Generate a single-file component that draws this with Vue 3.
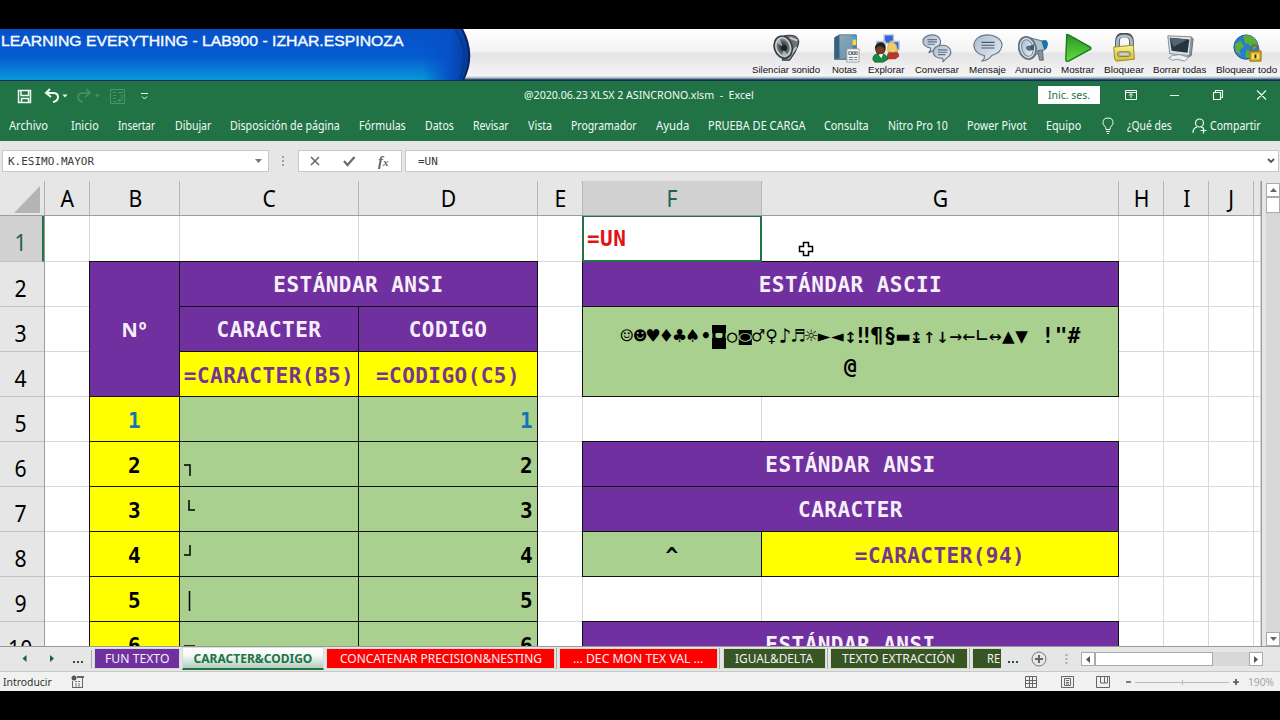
<script setup>
const vFit = {
  mounted(el, { value }) {
    const natural = el.offsetWidth
    if (!natural || !value) return
    el.style.transform = `scaleX(${value / natural})`
    el.style.marginRight = `${value - natural}px`
  },
}

const withGaps = (items) => items.map((item, i) => {
  const prev = items[i - 1]
  return { ...item, gap: prev ? item.x - prev.x - prev.w : item.x }
})

const menu = withGaps([
  ['Archivo', 9, 39], ['Inicio', 71, 28], ['Insertar', 118, 37], ['Dibujar', 175, 36],
  ['Disposición de página', 230, 110], ['Fórmulas', 359, 47], ['Datos', 425, 29],
  ['Revisar', 473, 36], ['Vista', 528, 24], ['Programador', 571, 66], ['Ayuda', 656, 33],
  ['PRUEBA DE CARGA', 708, 97], ['Consulta', 824, 45], ['Nitro Pro 10', 888, 60],
  ['Power Pivot', 967, 60], ['Equipo', 1046, 35],
].map(([label, x, w]) => ({ label, x, w })))

const tools = withGaps([
  ['Silenciar sonido', 'speaker', 752, 68], ['Notas', 'notes', 832, 25], ['Explorar', 'explore', 868, 36],
  ['Conversar', 'chat', 915, 44], ['Mensaje', 'message', 969, 37], ['Anuncio', 'horn', 1015, 36],
  ['Mostrar', 'play', 1061, 33], ['Bloquear', 'lock', 1104, 40], ['Borrar todas', 'monitor', 1153, 53],
  ['Bloquear todo', 'globe', 1216, 61],
].map(([label, icon, x, w]) => ({ label, icon, x, w })))

const columns = ['A', 'B', 'C', 'D', 'E', 'F', 'G', 'H', 'I', 'J', '']
const blanks = []
for (let r = 1; r <= 10; r++) for (let c = 1; c <= 11; c++) blanks.push({ r, c })

const symbols = '☺☻♥♦♣♠•◘○◙♂♀♪♬☼►◄↕‼¶§▬↨↑↓→←∟↔▲▼ !"#'.split('')
const symbolClass = (s) => ({
  inverse: s === '◘',
  squat: s === '◙',
  small: s === '○' || s === '•',
  thin: '↕↨↑↓→←∟↔☺'.includes(s),
})

const cells = [
  { r: 2, c: 2, rs: 3, cls: 'purple number', text: 'Nº' },
  { r: 2, c: 3, cs: 2, cls: 'purple', text: 'ESTÁNDAR ANSI' },
  { r: 3, c: 3, cls: 'purple', text: 'CARACTER' },
  { r: 3, c: 4, cls: 'purple', text: 'CODIGO' },
  { r: 4, c: 3, cls: 'formula', text: '=CARACTER(B5)' },
  { r: 4, c: 4, cls: 'formula', text: '=CODIGO(C5)' },
  { r: 2, c: 6, cs: 2, cls: 'purple', text: 'ESTÁNDAR ASCII' },
  { r: 6, c: 6, cs: 2, cls: 'purple', text: 'ESTÁNDAR ANSI' },
  { r: 7, c: 6, cs: 2, cls: 'purple', text: 'CARACTER' },
  { r: 8, c: 6, cls: 'green', text: '^' },
  { r: 8, c: 7, cls: 'formula', text: '=CARACTER(94)' },
  { r: 10, c: 6, cs: 2, cls: 'purple', text: 'ESTÁNDAR ANSI' },
]
for (let n = 1; n <= 6; n++) {
  const first = n === 1 ? ' blue' : ''
  cells.push({ r: n + 4, c: 2, cls: 'yellow' + first, text: n })
  cells.push({ r: n + 4, c: 4, cls: 'green right' + first, text: n })
}
const boxGlyphs = ['', 'M4 23h6v11', 'M9 13v10h6', 'M4 23h6v-10', 'M9.5 14v20', 'M4 24h11']

const place = (o) => ({
  gridRow: `${o.r} / span ${o.rs || 1}`,
  gridColumn: `${o.c} / span ${o.cs || 1}`,
})

const tabs = withGaps([
  ['FUN TEXTO', 'violet', 94, 86, 64], ['CARACTER&CODIGO', 'active', 182, 142, 119],
  ['CONCATENAR PRECISION&NESTING', 'red', 326, 229, 202], ['... DEC MON TEX VAL ...', 'red', 559, 159, 130],
  ['IGUAL&DELTA', 'olive', 723, 103, 78], ['TEXTO EXTRACCIÓN', 'olive', 830, 138, 113], ['RE', 'olive cut', 972, 29, 13],
].map(([label, cls, x, w, textW]) => ({ label, cls, x, w, textW })))
tabs[0].gap = 1
</script>

<template>
  <div class="screen">
    <header class="lab">
      <svg class="swoosh" width="472" height="51" viewBox="0 0 472 51">
        <defs>
          <linearGradient id="sky" x1="0" y1="0" x2="0" y2="1">
            <stop offset="0" stop-color="#0650c8" /><stop offset=".55" stop-color="#065bd0" />
            <stop offset="1" stop-color="#0798d8" />
          </linearGradient>
          <linearGradient id="edge" x1="0" y1="0" x2="1" y2="0">
            <stop offset="0" stop-color="#0650c8" stop-opacity="0" /><stop offset=".6" stop-color="#0650c4" />
            <stop offset="1" stop-color="#053a98" />
          </linearGradient>
        </defs>
        <path d="M0 0H462Q476 26 463 51H0Z" fill="url(#sky)" />
        <path d="M422 51L422 0H462Q476 26 463 51Z" fill="url(#edge)" />
        <path d="M455 0Q472 26 459 51" fill="none" stroke="#063288" stroke-width="2" opacity=".6" />
        <path d="M462 0Q476 26 463 51" fill="none" stroke="#06245e" stroke-width="2" />
      </svg>
      <div class="lab-title"><span v-fit="402" class="fit">LEARNING EVERYTHING - LAB900 - IZHAR.ESPINOZA</span></div>
      <div class="tools">
        <div v-for="t in tools" :key="t.label" class="tool" :style="{ width: t.w + 'px', marginLeft: t.gap + 'px' }">
          <svg width="30" height="30" viewBox="0 0 32 32">
            <defs>
              <radialGradient id="steel"><stop offset="0" stop-color="#191d20" /><stop offset=".45" stop-color="#4f565b" /><stop offset="1" stop-color="#b9c1c6" /></radialGradient>
              <linearGradient id="bubble" x1="0" y1="0" x2="1" y2="1"><stop offset="0" stop-color="#a9b9cb" /><stop offset="1" stop-color="#edf2f7" /></linearGradient>
              <linearGradient id="book" x1="0" y1="0" x2="1" y2="1"><stop offset="0" stop-color="#9ab4c6" /><stop offset="1" stop-color="#416b87" /></linearGradient>
              <linearGradient id="go" x1="0" y1="0" x2="0" y2="1"><stop offset="0" stop-color="#25962a" /><stop offset="1" stop-color="#65dc39" /></linearGradient>
              <linearGradient id="gold" x1="0" y1="0" x2="0" y2="1"><stop offset="0" stop-color="#faf391" /><stop offset="1" stop-color="#d4bc2a" /></linearGradient>
            </defs>
            <g v-if="t.icon === 'speaker'">
              <path d="M14 3Q24 1 28 5Q31 9 29 13Q27 20 20 29L12 29Z" fill="#6b7276" stroke="#272b2e" />
              <path d="M18 27l9-12M20 5l8 3" stroke="#c6ccd0" stroke-width="2" />
              <ellipse cx="13" cy="15" rx="9.500" ry="12" transform="rotate(-18 13 15)" fill="url(#steel)" stroke="#30363a" stroke-width="1.600" />
              <ellipse cx="13" cy="15" rx="7.500" ry="10" transform="rotate(-18 13 15)" fill="none" stroke="#dce0e2" />
              <path d="M13 15L6 10l3-4zM13 17l5 7-6 1z" fill="#bcc4c8" opacity=".75" />
              <circle cx="14" cy="16" r="3" fill="#1c2023" />
            </g>
            <g v-else-if="t.icon === 'notes'">
              <path d="M5 5L10 2H28V24L24 28H5Z" fill="url(#book)" stroke="#455e6e" />
              <path d="M5 5L10 2V26L5 28Z" fill="#37617d" />
              <path d="M11 2H24V26L11 28Z" fill="#83a6bc" opacity=".6" />
              <path d="M24 3h4v4h-4z" fill="#36a8df" /><path d="M24 7h4v6h-4z" fill="#edda48" />
              <path d="M18 17H31V31H18Z" fill="#fcfcfc" stroke="#969da2" />
              <path d="M20 20h3v3h-3zM24 20h2v3h-2zM27 20h2v3h-2zM20 26h5M26 26h3M20 28.500h5M26 28.500h3" fill="none" stroke="#57666f" />
            </g>
            <g v-else-if="t.icon === 'explore'">
              <path d="M14 2h10v9H14zM6 9h9v9H6zM21 9h9v9H21z" fill="#3266df" stroke="#bcc6d5" stroke-width="1.500" />
              <path d="M17 25Q17 19 24 19Q30 19 30 25L26 28H18Z" fill="#b33a2a" />
              <path d="M18 20Q17 9 22 10Q28 10 28 20Z" fill="#efd45b" stroke="#ceb134" />
              <ellipse cx="23" cy="16" rx="3" ry="4.500" fill="#f3c67b" />
              <path d="M2 28Q2 22 9 22Q17 22 18 28L13 31H4Z" fill="#198b43" stroke="#11602f" />
              <ellipse cx="10" cy="17" rx="5" ry="6" fill="#7c3b22" stroke="#33251d" />
              <path d="M4 17Q4 10 11 10Q17 11 15 18Q14 14 8 14Z" fill="#1e211e" /><path d="M8 23l3 4 2-5z" fill="#fff" />
            </g>
            <g v-else-if="t.icon === 'chat'" fill="url(#bubble)" stroke="#66758a" stroke-width="1.200">
              <path d="M11 2C5 2 1 5 1 9C1 13 5 15 9 16Q10 19 7 21Q14 19 16 15C24 10 18 2 11 2Z" />
              <path d="M22 13C16 13 12 16 12 20C12 25 17 27 22 27Q23 29 22 31L27 26C34 22 30 13 22 13Z" />
              <path d="M6 7h10M6 9.500h10M6 12h8M17 18h10M17 20.500h10M17 23h8" fill="none" />
            </g>
            <g v-else-if="t.icon === 'message'" fill="url(#bubble)" stroke="#66758a" stroke-width="1.200">
              <path d="M16 2C7 2 1 7 1 13C1 19 6 23 12 24Q13 28 9 30Q17 29 20 24C27 22 31 18 31 12C30 6 23 2 16 2Z" />
              <path d="M9 10h14M9 13h14M9 16h14" fill="none" stroke="#465a6c" />
            </g>
            <g v-else-if="t.icon === 'horn'">
              <path d="M12 5L28 9Q32 13 28 18L14 26Z" fill="#b3c1cb" stroke="#586c7a" />
              <path d="M25 9Q31 5 32 12Q31 18 28 18Z" fill="#1775ae" /><path d="M21 19l2 10h4l-1-11z" fill="#87949d" stroke="#58656d" />
              <ellipse cx="10" cy="16" rx="9" ry="12" transform="rotate(-15 10 16)" fill="#d9e0e6" stroke="#5d7488" stroke-width="2" />
              <ellipse cx="10" cy="16" rx="6" ry="9" transform="rotate(-15 10 16)" fill="url(#bubble)" stroke="#6c8292" />
              <path d="M11 14l6-2v6l-6 1z" fill="#3c5c73" /><circle cx="11" cy="16" r="2.500" fill="#566f81" />
            </g>
            <path v-else-if="t.icon === 'play'" d="M4 2Q3 1 6 2L29 15Q31 17 28 18L6 30Q3 31 3 28Z" fill="url(#go)" stroke="#17791f" stroke-width="1.500" />
            <g v-else-if="t.icon === 'lock'">
              <path d="M9 17V9Q9 2 16 2Q24 2 24 9V15" fill="none" stroke="#46515a" stroke-width="5" />
              <path d="M9 17V9Q9 3 16 3Q24 3 24 9V15" fill="none" stroke="#afbcc5" stroke-width="3" />
              <path d="M5 15L26 13L27 28L8 30Q6 29 6 27Z" fill="url(#gold)" stroke="#92832a" />
              <rect x="9" y="20" width="14" height="5" rx="2.500" fill="#b5b9a2" stroke="#837e43" /><path d="M12 22.500h8" stroke="#eee" />
            </g>
            <g v-else-if="t.icon === 'monitor'">
              <path d="M27 4L30 6L28 24L24 26" fill="#8c969c" stroke="#646e73" />
              <path d="M3 3L28 4L26 24L5 22Z" fill="#dce2e4" stroke="#7e898f" />
              <path d="M5 5L26 7L24 21L7 19Z" fill="#25343f" /><path d="M5 5L24 7L9 15Z" fill="#52646f" />
              <path d="M8 24l8-1 9 3-4 4-8-2-5 1-4-2z" fill="#eef1f1" stroke="#899296" />
            </g>
            <g v-else>
              <circle cx="15" cy="15" r="13" fill="#287bd2" stroke="#225792" />
              <path d="M12 3Q24 0 28 13L23 18L17 11L15 12L13 8zM3 12L9 8L13 14L8 18L10 24L4 20zM15 18L22 20L20 27L14 26z" fill="#58af39" />
              <path d="M21 21V17Q21 13 24 13Q28 13 28 17V20" fill="none" stroke="#65706e" stroke-width="2.500" />
              <path d="M19 20L31 19V30H19Z" fill="#d8a71b" stroke="#927411" /><path d="M21 22h8v6h-8z" fill="#f5de62" /><path d="M25 23v4" stroke="#37290a" stroke-width="2" />
            </g>
          </svg>
          <div class="tool-label"><span v-fit="t.w" class="fit">{{ t.label }}</span></div>
        </div>
      </div>
    </header>

    <div class="titlebar">
      <svg class="quick" width="160" height="24" viewBox="0 0 160 24" fill="none" stroke="#eff8f1">
        <path d="M18.500 6.500h12v12h-12zM21 6.500v5h7.500v-5M21.500 18.500v-4h7v4" stroke-width="1.500" />
        <path d="M50 5l-4 4 5 4M47 9h6q5 0 5 4t-5 5" stroke-width="2" />
        <path d="M62.500 10.500h5l-2.500 3z" fill="#eff8f1" stroke="none" />
        <g stroke="#4d9368"><path d="M86 5l4 4-5 4M89 9h-6q-5 0-5 4t5 5" stroke-width="1.500" />
          <path d="M110.500 5.500h14v14h-14zM113 8.500h3M118 8.500h5M113 11.500h3M113 14.500h3M113 17.500h3M118 16.500h4v-4M120 10.500l2 2 2-2M120 14.500l-2 2 2 2" />
          <path d="M95 10.500h5l-2.500 3z" fill="#4d9368" stroke="none" /></g>
        <path d="M141 9.500h7M142 12.500l2.500 2.500 2.500-2.500" />
      </svg>
      <div class="doc-name"><span v-fit="230" class="fit">@2020.06.23 XLSX 2 ASINCRONO.xlsm&nbsp; -&nbsp; Excel</span></div>
      <div class="sign-in"><span v-fit="42" class="fit">Inic. ses.</span></div>
      <svg class="window-buttons" width="160" height="24" viewBox="0 0 160 24" fill="none" stroke="#f2faf5">
        <path d="M5.500 7.500h11v9h-11zM5.500 9.500h11M11 15v-4M9 12.500l2-2 2 2" />
        <path d="M50 12.500h9M93.500 9.500h7v7h-7zM95.500 9.500v-2h7v7h-2M137 7.500l9 9M146 7.500l-9 9" stroke-width="1.100" />
      </svg>
    </div>

    <nav class="menu">
      <div v-for="m in menu" :key="m.label" :style="{ width: m.w + 'px', marginLeft: m.gap + 'px' }"><span v-fit="m.w" class="fit">{{ m.label }}</span></div>
      <svg class="bulb" width="12" height="18" viewBox="0 0 12 18" fill="none" stroke="#f2faf5"><path d="M4 12.500Q4 10 2.500 9Q1 7.500 1 5.500Q1 1 6 1T11 5.500Q11 7.500 9.500 9Q8 10 8 12.500ZM4 14.500h4M5 16.500h2" /></svg>
      <div class="ask"><span v-fit="45" class="fit">¿Qué des</span></div>
      <svg class="person" width="16" height="16" viewBox="0 0 16 16" fill="none" stroke="#f2faf5" stroke-width="1.200"><circle cx="7.500" cy="5" r="4" /><path d="M1 15Q1 10 5 9M9 9l2 1M11.500 9.500v6M8.500 12.500h6" /></svg>
      <div class="share"><span v-fit="51" class="fit">Compartir</span></div>
    </nav>

    <div class="formula-bar">
      <div class="name-box"><span v-fit="86" class="fit">K.ESIMO.MAYOR</span>
        <svg width="7" height="4" viewBox="0 0 7 4"><path d="M0 0h7L3.500 4z" fill="#777" /></svg>
      </div>
      <svg class="dots" width="3" height="12" viewBox="0 0 3 12"><path d="M0 1h2v2h-2zM0 5h2v2h-2zM0 9h2v2h-2z" fill="#a2a2a2" /></svg>
      <div class="fx">
        <svg width="54" height="16" viewBox="0 0 54 16" fill="none" stroke="#6c6c6c"><path d="M3 4l8 8M11 4L3 12" stroke-width="1.700" /><path d="M36 8l3.500 4 7-8" stroke-width="2.300" /></svg>
        <i>f<small>x</small></i>
      </div>
      <div class="formula-input"><span v-fit="20" class="fit">=UN</span>
        <svg width="8" height="6" viewBox="0 0 8 6"><path d="M1 1l3 3 3-3" fill="none" stroke="#555" stroke-width="1.800" /></svg>
      </div>
    </div>

    <main class="sheet">
      <div class="sheet-main">
        <div class="col-heads">
          <div class="corner"><svg width="27" height="27" viewBox="0 0 27 27"><path d="M26 0V27H0Z" fill="#b4b4b4" /></svg></div>
          <div v-for="c in columns" :key="c" class="col-head" :class="{ selected: c === 'F' }"><span>{{ c }}</span></div>
        </div>
        <div class="body">
          <div class="row-heads">
            <div v-for="n in 10" :key="n" :class="{ selected: n === 1 }"><span>{{ n }}</span></div>
          </div>
          <div class="cells">
            <div v-for="b in blanks" :key="b.r + '-' + b.c" class="blank" :style="place(b)"></div>
            <div v-for="(c, i) in cells" :key="'c' + i" class="cell" :class="c.cls" :style="place(c)"><span>{{ c.text }}</span></div>
            <div v-for="(g, i) in boxGlyphs" :key="'g' + i" class="cell green glyph" :style="place({ r: i + 5, c: 3 })">
              <svg width="24" height="44" viewBox="0 0 24 44" fill="none" stroke="#000" stroke-width="1.500"><path :d="g" /></svg>
            </div>
            <div class="cell green ascii" :style="place({ r: 3, c: 6, rs: 2, cs: 2 })">
              <div class="symbols"><b v-for="(s, i) in symbols" :key="i" :class="symbolClass(s)">{{ s }}</b></div>
              <div>@</div>
            </div>
            <div class="cell entry" :style="place({ r: 1, c: 6 })"><span>=UN</span></div>
            <div class="cursor-cell" :style="place({ r: 1, c: 7 })">
              <svg width="16" height="16" viewBox="0 0 16 16"><path d="M5.500 1.500h5v4h4v5h-4v4h-5v-4h-4v-5h4z" fill="#fff" stroke="#000" stroke-width="1.500" /></svg>
            </div>
          </div>
        </div>
      </div>
      <div class="v-scroll">
        <div class="box"><svg width="7" height="4" viewBox="0 0 7 4"><path d="M0 4h7L3.500 0z" fill="#666" /></svg></div>
        <div class="v-thumb"></div>
        <div class="v-track"></div>
        <div class="box"><svg width="7" height="4" viewBox="0 0 7 4"><path d="M0 0h7L3.500 4z" fill="#666" /></svg></div>
      </div>
    </main>

    <div class="tab-strip">
      <svg width="93" height="22" viewBox="0 0 93 22"><path d="M26.500 8v7l-4-3.500zM50 8v7l4-3.500z" fill="#0f6342" /><path d="M73 14h2v2h-2zM77 14h2v2h-2zM81 14h2v2h-2z" fill="#21583f" /><path d="M91.500 3v18" stroke="#a9a9a9" /></svg>
      <div v-for="t in tabs" :key="t.label" class="tab" :class="t.cls" :style="{ width: t.w + 'px', marginLeft: t.gap + 'px' }"><span v-fit="t.textW" class="fit">{{ t.label }}</span></div>
      <svg class="strip-end" width="76" height="24" viewBox="0 0 76 24" fill="none"><path d="M7 14h2v2h-2zM11 14h2v2h-2zM15 14h2v2h-2z" fill="#21583f" /><circle cx="38" cy="12" r="7" stroke="#777" /><path d="M34 12h8M38 8v8" stroke="#666" stroke-width="2" /><path d="M64.500 7h2v2h-2zM64.500 11h2v2h-2zM64.500 15h2v2h-2z" fill="#aaa" /></svg>
      <div class="h-scroll">
        <div class="box"><svg width="4" height="7" viewBox="0 0 4 7"><path d="M4 0v7L0 3.500z" fill="#555" /></svg></div>
        <div class="h-thumb"></div><div class="h-track"></div>
        <div class="box"><svg width="4" height="7" viewBox="0 0 4 7"><path d="M0 0v7L4 3.500z" fill="#555" /></svg></div>
      </div>
    </div>

    <footer class="status">
      <div class="mode"><span v-fit="49" class="fit">Introducir</span></div>
      <svg class="macro" width="14" height="14" viewBox="0 0 14 14"><circle cx="3" cy="3" r="2.500" fill="#555" /><path d="M6 1h7v2h-7zM1 6h1v6h9v-9h1v10h-11z" fill="#666" /><path d="M4 6.500h2M7 6.500h2M4 9h2M7 9h2M4 11h2M7 11h2" stroke="#777" /></svg>
      <svg class="views" width="220" height="16" viewBox="0 0 220 16" fill="none" stroke="#666">
        <path d="M5.500 2.500h11v11h-11zM5.500 6.500h11M5.500 9.500h11M9.500 2.500v11M12.500 2.500v11" />
        <path d="M41.500 2.500h12v11h-12zM44.500 4.500h6v7h-6zM46 6.500h3M46 8.500h3M46 10h3" />
        <path d="M76.500 2.500h13v11h-13zM80.500 2.500v6.500h4v-6.500M84.500 9h3v-6" />
        <path d="M106 8h5M213 8h6M216 5v6" stroke="#555" stroke-width="1.700" />
        <path d="M115 8.500h94M162.500 6v5" stroke="#bbb" />
      </svg>
      <div class="zoom"><span v-fit="26" class="fit">190%</span></div>
    </footer>
  </div>
</template>

<style>
body { background: #000; overflow: hidden; }
</style>

<style scoped>
.screen { width: 1280px; height: 720px; box-sizing: border-box; padding-top: 29px; background: #000; overflow: hidden; font-family: "Noto Sans", "Open Sans", sans-serif; display: flex; flex-direction: column; }
.screen * { box-sizing: border-box; }
svg { display: block; flex: none; }
.fit { display: inline-block; white-space: nowrap; transform-origin: 0 50%; flex: none; }
.lab { position: relative; height: 52px; flex: none; background: linear-gradient(#fff, #f3f3f3 42%, #e4e4e6 48%, #f5f5f5 90%, #aebdcd 94%, #102f58 98%); overflow: hidden; }
.swoosh { position: absolute; left: 0; top: 0; }
.lab-title { position: absolute; left: 1px; top: 2px; color: #f5faff; font: 14.5px/20px "Liberation Sans", sans-serif; -webkit-text-stroke: .4px #f5faff; }
.tools { position: absolute; left: 0; top: 4px; display: flex; }
.tool { flex: none; display: flex; flex-direction: column; align-items: center; }
.tool-label { width: 100%; margin-top: 1px; font: 9.5px/12px "Liberation Sans", sans-serif; color: #111; }
.titlebar { height: 28px; flex: none; background: #217346; color: #f2faf5; display: flex; align-items: center; font-size: 11.5px; }
.quick { margin-top: 1px; }
.doc-name { width: 230px; margin-left: 364px; margin-top: -1px; }
.sign-in { width: 62px; height: 18px; margin-left: 284px; background: #fff; color: #217346; line-height: 17px; padding-left: 10px; font-size: 11px; }
.window-buttons { margin-left: 20px; }
.menu { height: 32px; flex: none; background: #217346; color: #f2faf5; display: flex; align-items: center; font-size: 12px; }
.menu > * { flex: none; margin-top: 1px; }
.bulb { margin-left: 21px; }
.ask { width: 45px; margin-left: 13px; }
.person { margin-left: 20px; }
.share { width: 51px; margin-left: 2px; }
.formula-bar { height: 40px; flex: none; background: #e6e6e6; display: flex; align-items: center; color: #3a3a3a; font: 11px "DejaVu Sans Mono", monospace; }
.name-box { width: 267px; height: 22px; margin-left: 2px; background: #fff; border: 1px solid #c8c8c8; display: flex; align-items: center; padding: 0 6px 0 5px; justify-content: space-between; }
.dots { margin-left: 13px; }
.fx { width: 104px; height: 22px; margin-left: 13px; background: #fff; border: 1px solid #c8c8c8; display: flex; align-items: center; padding-left: 9px; }
.fx i { margin-left: 16px; font: italic bold 15px/18px "Liberation Serif", serif; color: #666; }
.fx small { font-size: 11px; }
.formula-input { width: 874px; height: 22px; margin-left: 3px; background: #fff; border: 1px solid #c8c8c8; display: flex; align-items: center; padding: 0 3px 0 12px; justify-content: space-between; }
.sheet { height: 465px; flex: none; background: #e6e6e6; display: flex; overflow: hidden; }
.sheet-main { width: 1262px; border-right: 1px solid #999; }
.col-heads { height: 35px; display: grid; grid-template-columns: 45px 45px 90px 179px 179px 45px 179px 357px 45px 45px 45px 7px; border-bottom: 1px solid #9c9c9c; }
.corner { border-right: 1px solid #b0b0b0; padding: 5px 0 0 14px; }
.col-head { border-right: 1px solid #b6b6b6; text-align: center; font-size: 23px; line-height: 35px; color: #000; overflow: hidden; padding-left: 1px; }
.col-head span, .row-heads span { display: inline-block; transform: scaleX(.92); }
.col-head.selected { background: #d2d2d2; color: #216647; padding-left: 0; }
.body { display: flex; height: 430px; overflow: hidden; }
.row-heads { width: 45px; flex: none; border-right: 1px solid #9c9c9c; }
.row-heads div { height: 45px; border-bottom: 1px solid #c3c3c3; text-align: center; font-size: 23px; line-height: 52px; padding-right: 3px; color: #000; overflow: hidden; }
.row-heads div.selected { height: 46px; line-height: 53px; padding-right: 1px; background: #d2d2d2; color: #216647; border-right: 2px solid #217346; }
.cells { flex: none; width: 1216px; height: 451px; background: #fff; display: grid; grid-template-columns: 45px 90px 179px 179px 45px 179px 357px 45px 45px 45px 7px; grid-template-rows: 46px repeat(9, 45px); font: bold 21px "DejaVu Sans Mono", monospace; }
.blank { border-right: 1px solid #d9d9d9; border-bottom: 1px solid #d9d9d9; }
.cell { position: relative; display: flex; align-items: center; justify-content: center; margin: -1px 0 0 -1px; border: 1px solid #111; letter-spacing: .46px; white-space: nowrap; padding-top: 1px; }
.purple { background: #7030a0; color: #f6effa; }
.number { font-family: "Noto Sans", sans-serif; font-size: 20px; letter-spacing: 1px; }
.yellow, .green, .formula { padding-top: 4px; }
.yellow { background: #ff0; color: #000; }
.formula { background: #ff0; color: #74368f; }
.green { background: #a9d08e; color: #000; }
.right { justify-content: flex-end; padding-right: 4px; }
.blue { color: #1474b4; }
.glyph { justify-content: flex-start; padding-top: 0; }
.ascii { flex-direction: column; line-height: 31px; padding-top: 0; }
.symbols { display: flex; }
.symbols b { width: 13.17px; letter-spacing: 0; line-height: 31px; display: flex; justify-content: center; }
.symbols .inverse { height: 24px; margin-top: 4px; line-height: 22px; background: linear-gradient(#000 35%, transparent 35%, transparent 55%, #000 55%); }
.symbols .squat { transform: scaleY(.7); }
.symbols .small { font-size: 17px; }
.symbols .thin { font-weight: normal; }
.entry { justify-content: flex-start; padding: 0 0 0 3px; background: #fff; color: #e01418; border: 2px solid #217346; z-index: 2; }
.cursor-cell { padding: 25px 0 0 36px; }
.v-scroll { width: 14px; margin-left: 4px; padding-top: 2px; display: flex; flex-direction: column; }
.box { width: 14px; height: 14px; border: 1px solid #aaa; background: #fff; display: flex; align-items: center; justify-content: center; flex: none; }
.v-thumb { height: 16px; border: 1px solid #aaa; background: #fff; }
.v-track { flex: 1; background: #d8d8d8; }
.tab-strip { height: 26px; flex: none; background: #e6e6e6; border-top: 1px solid #999; border-bottom: 1px solid #c6c6c6; display: flex; align-items: flex-start; }
.tab { height: 21px; margin-top: 1px; flex: none; display: flex; align-items: center; justify-content: center; font-size: 12px; color: #f4f0f4; border: 1px solid #d6ded3; overflow: hidden; }
.violet { background: #7030a0; }
.red { background: #f00; }
.olive { background: #375623; }
.red, .olive { box-shadow: 1px 0 #e6e6e6, 2px 0 #a9a9a9; }
.tab.cut { justify-content: flex-start; padding-left: 14px; border-right: 0; box-shadow: none; }
.tab.active { margin-top: 0; height: 23px; background: linear-gradient(#fff, #f6faf7 35%, #b5cebf); color: #217346; font-weight: bold; border-bottom: 2px solid #217346; }
.h-scroll { display: flex; margin: 5px 17px 0 auto; width: 182px; }
.h-thumb { width: 118px; border: 1px solid #aaa; background: #fff; }
.h-track { width: 36px; background: #d8d8d8; }
.status { height: 19px; flex: none; background: #f1f1f1; display: flex; align-items: center; color: #333; font-size: 11px; }
.mode { width: 49px; margin-left: 3px; }
.macro { margin-left: 19px; }
.views { margin-left: 935px; }
.zoom { width: 26px; margin-left: 8px; color: #a5a5a5; }
</style>
